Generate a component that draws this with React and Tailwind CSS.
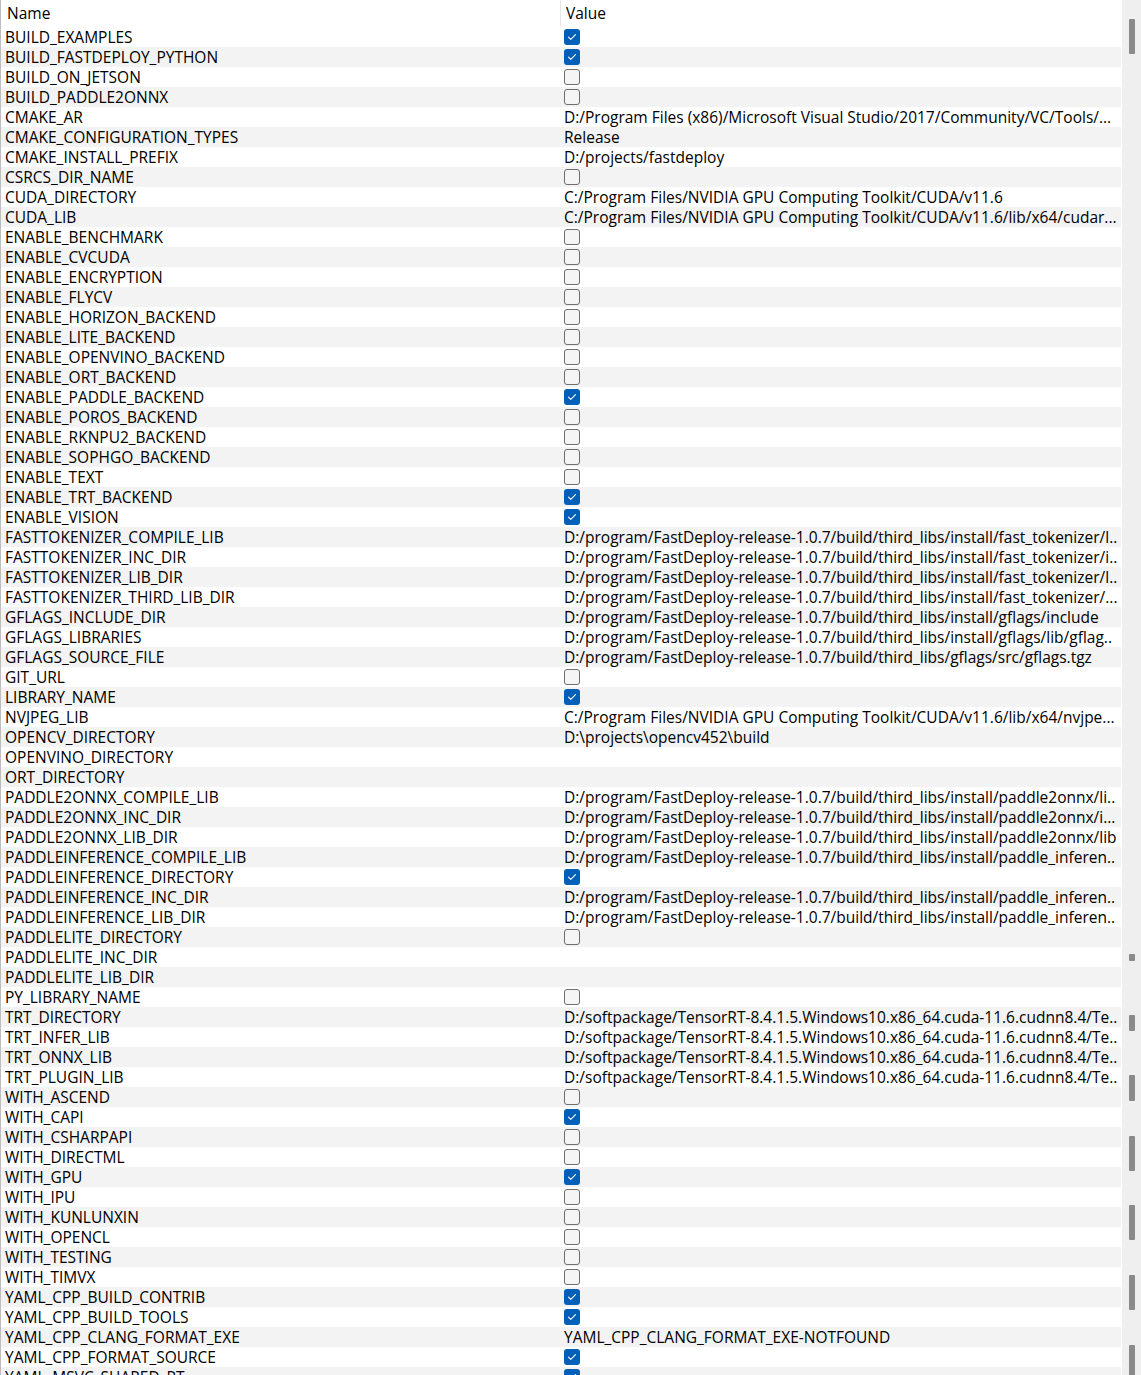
import React from "react";

const ON = true;
const OFF = false;
const FD = "D:/program/FastDeploy-release-1.0.7/build/third_libs/install/";
const TRT = "D:/softpackage/TensorRT-8.4.1.5.Windows10.x86_64.cuda-11.6.cudnn8.4/Te..";

const rows = [
  ["BUILD_EXAMPLES", ON],
  ["BUILD_FASTDEPLOY_PYTHON", ON],
  ["BUILD_ON_JETSON", OFF],
  ["BUILD_PADDLE2ONNX", OFF],
  ["CMAKE_AR", "D:/Program Files (x86)/Microsoft Visual Studio/2017/Community/VC/Tools/..."],
  ["CMAKE_CONFIGURATION_TYPES", "Release"],
  ["CMAKE_INSTALL_PREFIX", "D:/projects/fastdeploy"],
  ["CSRCS_DIR_NAME", OFF],
  ["CUDA_DIRECTORY", "C:/Program Files/NVIDIA GPU Computing Toolkit/CUDA/v11.6"],
  ["CUDA_LIB", "C:/Program Files/NVIDIA GPU Computing Toolkit/CUDA/v11.6/lib/x64/cudar..."],
  ["ENABLE_BENCHMARK", OFF],
  ["ENABLE_CVCUDA", OFF],
  ["ENABLE_ENCRYPTION", OFF],
  ["ENABLE_FLYCV", OFF],
  ["ENABLE_HORIZON_BACKEND", OFF],
  ["ENABLE_LITE_BACKEND", OFF],
  ["ENABLE_OPENVINO_BACKEND", OFF],
  ["ENABLE_ORT_BACKEND", OFF],
  ["ENABLE_PADDLE_BACKEND", ON],
  ["ENABLE_POROS_BACKEND", OFF],
  ["ENABLE_RKNPU2_BACKEND", OFF],
  ["ENABLE_SOPHGO_BACKEND", OFF],
  ["ENABLE_TEXT", OFF],
  ["ENABLE_TRT_BACKEND", ON],
  ["ENABLE_VISION", ON],
  ["FASTTOKENIZER_COMPILE_LIB", FD + "fast_tokenizer/l.."],
  ["FASTTOKENIZER_INC_DIR", FD + "fast_tokenizer/i.."],
  ["FASTTOKENIZER_LIB_DIR", FD + "fast_tokenizer/l.."],
  ["FASTTOKENIZER_THIRD_LIB_DIR", FD + "fast_tokenizer/..."],
  ["GFLAGS_INCLUDE_DIR", FD + "gflags/include"],
  ["GFLAGS_LIBRARIES", FD + "gflags/lib/gflag.."],
  ["GFLAGS_SOURCE_FILE", "D:/program/FastDeploy-release-1.0.7/build/third_libs/gflags/src/gflags.tgz"],
  ["GIT_URL", OFF],
  ["LIBRARY_NAME", ON],
  ["NVJPEG_LIB", "C:/Program Files/NVIDIA GPU Computing Toolkit/CUDA/v11.6/lib/x64/nvjpe..."],
  ["OPENCV_DIRECTORY", "D:\\projects\\opencv452\\build"],
  ["OPENVINO_DIRECTORY", ""],
  ["ORT_DIRECTORY", ""],
  ["PADDLE2ONNX_COMPILE_LIB", FD + "paddle2onnx/li.."],
  ["PADDLE2ONNX_INC_DIR", FD + "paddle2onnx/i..."],
  ["PADDLE2ONNX_LIB_DIR", FD + "paddle2onnx/lib"],
  ["PADDLEINFERENCE_COMPILE_LIB", FD + "paddle_inferen.."],
  ["PADDLEINFERENCE_DIRECTORY", ON],
  ["PADDLEINFERENCE_INC_DIR", FD + "paddle_inferen.."],
  ["PADDLEINFERENCE_LIB_DIR", FD + "paddle_inferen.."],
  ["PADDLELITE_DIRECTORY", OFF],
  ["PADDLELITE_INC_DIR", ""],
  ["PADDLELITE_LIB_DIR", ""],
  ["PY_LIBRARY_NAME", OFF],
  ["TRT_DIRECTORY", TRT],
  ["TRT_INFER_LIB", TRT],
  ["TRT_ONNX_LIB", TRT],
  ["TRT_PLUGIN_LIB", TRT],
  ["WITH_ASCEND", OFF],
  ["WITH_CAPI", ON],
  ["WITH_CSHARPAPI", OFF],
  ["WITH_DIRECTML", OFF],
  ["WITH_GPU", ON],
  ["WITH_IPU", OFF],
  ["WITH_KUNLUNXIN", OFF],
  ["WITH_OPENCL", OFF],
  ["WITH_TESTING", OFF],
  ["WITH_TIMVX", OFF],
  ["YAML_CPP_BUILD_CONTRIB", ON],
  ["YAML_CPP_BUILD_TOOLS", ON],
  ["YAML_CPP_CLANG_FORMAT_EXE", "YAML_CPP_CLANG_FORMAT_EXE-NOTFOUND"],
  ["YAML_CPP_FORMAT_SOURCE", ON],
  ["YAML_MSVC_SHARED_RT", ON],
];

function CheckBox({ checked }) {
  if (checked) {
    return (
      <div className="w-[16px] h-[16px] rounded-[3px] bg-[#005fb8] flex items-center justify-center">
        <svg width="10" height="8" viewBox="0 0 10 8" fill="none">
          <path d="M1.5 4.2 L3.8 6.3 L8.5 1.6" stroke="white" strokeWidth="1.1" strokeLinecap="round" strokeLinejoin="round" />
        </svg>
      </div>
    );
  }
  return <div className="w-[16px] h-[16px] rounded-[3px] border border-[#6e6e6e] bg-[#f5f5f5]" />;
}

const marks = [
  [19, 54],
  [954, 961],
  [1015, 1031],
  [1075, 1101],
  [1136, 1171],
  [1205, 1240],
  [1275, 1310],
  [1345, 1380],
];

export default function App() {
  return (
    <div
      className="relative w-[1141px] h-[1375px] overflow-hidden bg-white text-black flex"
      style={{ fontFamily: '"Open Sans", "Noto Sans", sans-serif' }}
    >
      <div className="w-[1122px] h-full border-l border-[#bdbdbd] flex flex-col">
        <div className="h-[27px] flex shrink-0 text-[15.5px]">
          <div className="w-[559px] pl-[6px] pt-[2px]">Name</div>
          <div className="border-l border-[#e5e5e5] h-[26px] pl-[5px] pt-[2px]">Value</div>
        </div>
        {rows.map(([name, value], i) => (
          <div
            key={name}
            className={`h-[20px] shrink-0 flex items-center text-[15.5px] leading-[20px] w-[1120px] ${
              i % 2 === 1 ? "bg-[#f3f3f3]" : "bg-white"
            }`}
          >
            <div className="w-[559px] pl-[4px] whitespace-nowrap overflow-hidden">{name}</div>
            <div className="flex-1 pl-[4px] whitespace-nowrap overflow-hidden">
              {typeof value === "boolean" ? <CheckBox checked={value} /> : value}
            </div>
          </div>
        ))}
      </div>
      <div className="w-[19px] h-full bg-[#efefef] relative">
        {marks.map(([a, b]) => (
          <div
            key={a}
            className="absolute left-[7px] w-[6px] bg-[#8a8a8a] rounded-[1px]"
            style={{ top: a, height: b - a }}
          />
        ))}
      </div>
    </div>
  );
}
